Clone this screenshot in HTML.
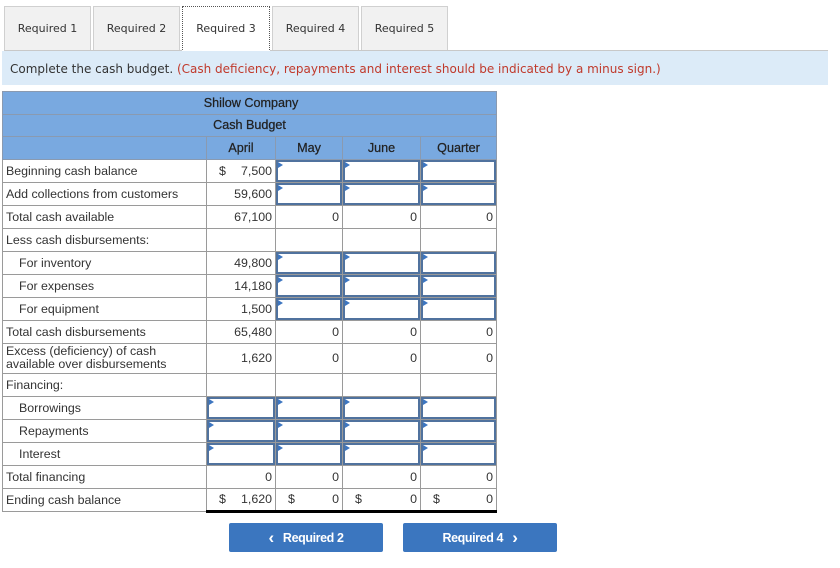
<!DOCTYPE html>
<html><head><style>
*{box-sizing:border-box;margin:0;padding:0}
body{width:840px;height:568px;background:#fff;position:relative;font-family:"Liberation Sans",Arial,sans-serif;overflow:hidden}
.tab{position:absolute;top:6px;height:45px;background:#f1f1f1;border:1px solid #d0d0d0;border-bottom:none;font-family:"DejaVu Sans","Liberation Sans",sans-serif;font-size:11px;color:#333;text-align:center;line-height:44px}
.tab.act{background:#fff;border:1px dotted #555;border-bottom:none;height:46px}
.line{position:absolute;left:4px;top:50px;width:824px;height:1px;background:#c8c8c8}
.bar{position:absolute;left:2px;top:51px;width:826px;height:34px;background:#dcebf8;font-family:"DejaVu Sans","Liberation Sans",sans-serif;font-size:12px;color:#333;line-height:36px;padding-left:8px}
.bar span{color:#c0392b}
table{position:absolute;left:2px;top:91px;border-collapse:collapse;table-layout:fixed;width:494px;font-size:12.4px;color:#333}
td{border:1px solid #9a9a9a;height:23px;padding:0 3px;white-space:nowrap;position:relative}
tr.h td{background:#79a9e0;text-align:center;color:#222;height:22.5px;border-color:#8a9ab0;font-size:12.6px;-webkit-text-stroke:0.25px #222}
.n{text-align:right}
.in{padding:0}
.in div{position:absolute;left:0;top:0;right:0;bottom:0;border:2px solid #50729e;background:#fff}
.in div:before{content:"";position:absolute;left:0;top:0;border-left:5px solid #3d76c0;border-top:3px solid transparent;border-bottom:3px solid transparent}
.ind{padding-left:16px}
.d{float:left;padding-left:9px}
.tb td.v{border-top:1px solid #000}
.eb td.v{border-bottom:3px solid #000}
.btn{position:absolute;top:523px;width:154px;height:29px;background:#3b76bf;border-radius:2px;color:#fff;font-weight:bold;font-size:12.5px;text-align:center;line-height:29px;letter-spacing:-0.4px}
.btn b{font-size:17px;font-weight:bold;vertical-align:-1px}
</style></head><body>
<div class="tab" style="left:4px;width:87px">Required 1</div>
<div class="tab" style="left:93px;width:87px">Required 2</div>
<div class="tab" style="left:272px;width:87px">Required 4</div>
<div class="tab" style="left:361px;width:87px">Required 5</div>
<div class="line"></div>
<div class="tab act" style="left:182px;width:88px">Required 3</div>
<div class="bar">Complete the cash budget. <span>(Cash deficiency, repayments and interest should be indicated by a minus sign.)</span></div>
<table>
<colgroup><col style="width:204px"><col style="width:69px"><col style="width:67px"><col style="width:78px"><col style="width:76px"></colgroup>
<tr class="h"><td colspan="5" style="padding-right:0">Shilow Company</td></tr>
<tr class="h"><td colspan="5">Cash Budget</td></tr>
<tr class="h"><td></td><td>April</td><td>May</td><td>June</td><td>Quarter</td></tr>
<tr><td>Beginning cash balance</td><td class="n"><span class="d">$</span>7,500</td><td class="in"><div></div></td><td class="in"><div></div></td><td class="in"><div></div></td></tr>
<tr><td>Add collections from customers</td><td class="n">59,600</td><td class="in"><div></div></td><td class="in"><div></div></td><td class="in"><div></div></td></tr>
<tr class="tb"><td>Total cash available</td><td class="n v">67,100</td><td class="n v">0</td><td class="n v">0</td><td class="n v">0</td></tr>
<tr><td>Less cash disbursements:</td><td></td><td></td><td></td><td></td></tr>
<tr><td class="ind">For inventory</td><td class="n">49,800</td><td class="in"><div></div></td><td class="in"><div></div></td><td class="in"><div></div></td></tr>
<tr><td class="ind">For expenses</td><td class="n">14,180</td><td class="in"><div></div></td><td class="in"><div></div></td><td class="in"><div></div></td></tr>
<tr><td class="ind">For equipment</td><td class="n">1,500</td><td class="in"><div></div></td><td class="in"><div></div></td><td class="in"><div></div></td></tr>
<tr class="tb"><td>Total cash disbursements</td><td class="n v">65,480</td><td class="n v">0</td><td class="n v">0</td><td class="n v">0</td></tr>
<tr class="tb"><td style="height:30px;line-height:13px">Excess (deficiency) of cash<br>available over disbursements</td><td class="n v">1,620</td><td class="n v">0</td><td class="n v">0</td><td class="n v">0</td></tr>
<tr><td>Financing:</td><td></td><td></td><td></td><td></td></tr>
<tr><td class="ind">Borrowings</td><td class="in"><div></div></td><td class="in"><div></div></td><td class="in"><div></div></td><td class="in"><div></div></td></tr>
<tr><td class="ind">Repayments</td><td class="in"><div></div></td><td class="in"><div></div></td><td class="in"><div></div></td><td class="in"><div></div></td></tr>
<tr><td class="ind">Interest</td><td class="in"><div></div></td><td class="in"><div></div></td><td class="in"><div></div></td><td class="in"><div></div></td></tr>
<tr class="tb"><td>Total financing</td><td class="n v">0</td><td class="n v">0</td><td class="n v">0</td><td class="n v">0</td></tr>
<tr class="tb eb"><td>Ending cash balance</td><td class="n v"><span class="d">$</span>1,620</td><td class="n v"><span class="d">$</span>0</td><td class="n v"><span class="d">$</span>0</td><td class="n v"><span class="d">$</span>0</td></tr>
</table>
<div class="btn" style="left:229px"><b>&lsaquo;</b>&nbsp;&nbsp; Required 2</div>
<div class="btn" style="left:403px">Required 4 &nbsp;&nbsp;<b>&rsaquo;</b></div>
</body></html>
